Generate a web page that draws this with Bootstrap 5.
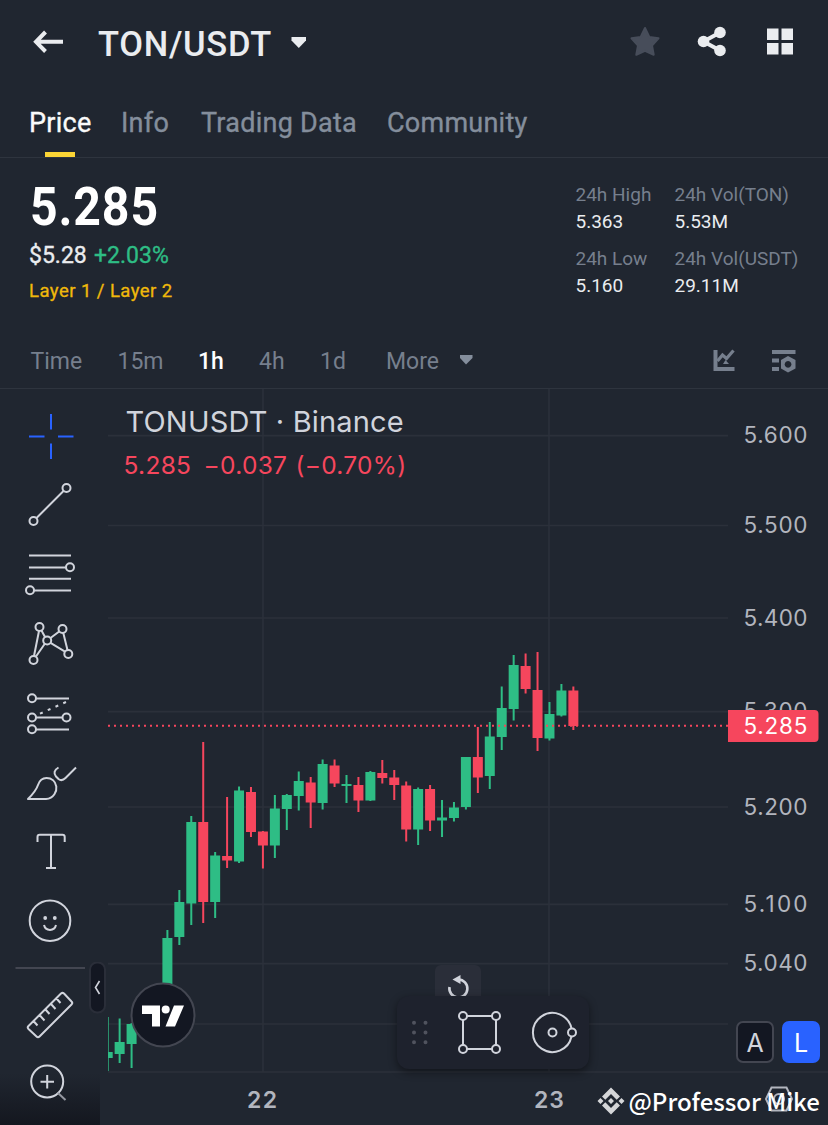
<!DOCTYPE html>
<html lang="en">
<head>
<meta charset="utf-8">
<meta name="viewport" content="width=device-width, initial-scale=1">
<title>TON/USDT</title>
<link href="https://cdn.jsdelivr.net/npm/bootstrap@5.3.0/dist/css/bootstrap.min.css" rel="stylesheet">
<style>
body{background:#202630;color:#eaecef;font-family:Roboto,"Liberation Sans",sans-serif;width:828px;height:1125px;overflow:hidden}
svg{display:block;flex:none}
span,.ln{white-space:nowrap}
.topbar{height:86px;padding:0 34px 2px 33px}
.pair{font-size:34.5px;font-weight:500;line-height:40px;letter-spacing:.7px;margin-left:34px;padding-top:3px}
.tabs{height:72px;border-bottom:1px solid #2e343e;padding-left:29px;font-size:27px;font-weight:400;letter-spacing:.25px;-webkit-text-stroke:.35px currentColor;color:#848e9c}
.tabs span{position:relative;line-height:74px;height:71px}
.tabs .on{color:#fafafa}
.tabs .on::after{content:"";position:absolute;left:16px;bottom:0;width:30px;height:5px;background:#fcd535}
.quote{height:173px;padding:0 29px}
.big{font-size:54.5px;font-weight:700;line-height:60px;color:#fff;margin-top:18px;letter-spacing:1px;transform:scaleX(.885);transform-origin:0 0;padding-left:1px}
.sub{font-size:23px;font-weight:400;-webkit-text-stroke:.35px currentColor;line-height:30px;margin-top:5px}
.up{color:#2ebd85}
.layer{font-size:18.5px;font-weight:400;-webkit-text-stroke:.3px currentColor;letter-spacing:.45px;line-height:24px;color:#f0b90b;margin-top:8px}
.stat{font-size:19px;line-height:27px}
.stat .lab{color:#767f8d}
.stat + .stat{margin-top:9.5px}
.frames{height:58px;border-bottom:1px solid #2e343e;font-size:23px;color:#767f8d;line-height:58px}
.frames span{padding-top:4px}
.frames .on{color:#fff;font-weight:500}
.tools{width:100px;height:736px;padding-top:13px;background:linear-gradient(transparent 93%,#14171f 100%)}
.tools g,.dock g{fill:none;stroke:#d1d4dc;stroke-width:2}
.chart{width:728px;height:736px}
.legend1,.legend2{position:absolute;left:25.500px;top:14px;font:400 29px/38px Inter,sans-serif;letter-spacing:.17px;color:#d1d4dc}
.legend2{left:23.500px;top:60px;font-size:24.5px;line-height:32px;letter-spacing:.3px;color:#f6465d;word-spacing:1px}
.fold{position:absolute;left:-11px;top:573px}
.reset{position:absolute;left:335px;top:576px;width:46px;height:40px;border-radius:6px;background:#2a2e39}
.dock{position:absolute;left:297px;top:607px;width:192px;height:73px;border-radius:12px;background:#1e222d;box-shadow:0 3px 9px rgba(0,0,0,.45)}
.sq{width:38px;height:42px;border-radius:7px;font:400 25px/40px Inter,sans-serif;text-align:center;border:2px solid #434651;background:#131722;color:#d1d4dc}
.sq.blue{background:#2962ff;border-color:#2962ff;color:#fff}
.modes{position:absolute;left:636px;top:632px;gap:8px}
.mark-by{position:absolute;left:497px;top:694px;font:500 24px/36px "Noto Sans CJK SC",sans-serif;color:#fff}
</style>
</head>
<body>
<header class="topbar d-flex align-items-center">
  <svg width="31" height="24" viewBox="33 30 31 24"><path d="M63 41.8H37M45.500 32L36 41.800L45.500 51.500" fill="none" stroke="#eaecef" stroke-width="4"/></svg>
  <span class="pair">TON/USDT</span>
  <svg style="margin-left:19px" width="16" height="13" viewBox="292 35 16 13"><path d="M292.500 36H307V39.500L299.800 47L292.500 39.500Z" fill="#eaecef"/></svg>
  <svg class="ms-auto" width="164" height="32" viewBox="630 27 164 32">
    <path d="M645 29L649.300 37.900L658.500 39.300L652 46.500L653.700 55.800L645 51.800L636.300 55.800L638 46.500L631.500 39.300L640.700 37.900Z" fill="#474d5a" stroke="#474d5a" stroke-width="2" stroke-linejoin="round"/>
    <path d="M720 33.500L703.500 42.500L720 51.500" fill="none" stroke="#eaecef" stroke-width="4"/>
    <g fill="#eaecef"><circle cx="720" cy="33.500" r="5.800"/><circle cx="703.500" cy="42.500" r="5.800"/><circle cx="720" cy="51.500" r="5.800"/>
    <path d="M767 29.500h11.500v11.500h-11.500zM781.500 29.500h11.500v11.500h-11.500zM767 44h11.500v11.500h-11.500zM781.500 44h11.500v11.500h-11.500z"/></g>
  </svg>
</header>
<nav class="tabs d-flex">
  <span class="on" style="width:92px">Price</span><span style="width:80px">Info</span><span style="width:186px">Trading Data</span><span>Community</span>
</nav>
<section class="quote d-flex justify-content-between">
  <div>
    <div class="big">5.285</div>
    <div class="sub ln d-flex"><span class="usd" style="width:65px">$5.28</span><span class="up">+2.03%</span></div>
    <div class="layer ln">Layer 1 / Layer 2</div>
  </div>
  <div class="d-flex" style="padding-top:23px">
    <div style="width:99px"><div class="stat"><div class="lab">24h High</div><div class="v">5.363</div></div><div class="stat"><div class="lab">24h Low</div><div class="v">5.160</div></div></div>
    <div style="width:124.500px"><div class="stat"><div class="lab ln">24h Vol(TON)</div><div class="v">5.53M</div></div><div class="stat"><div class="lab ln">24h Vol(USDT)</div><div class="v">29.11M</div></div></div>
  </div>
</section>
<nav class="frames d-flex align-items-center" style="padding-left:30.500px">
  <span style="width:87px">Time</span><span style="width:80.500px">15m</span><span class="on" style="width:61px">1h</span><span style="width:61px">4h</span><span style="width:66px">1d</span><span style="width:74px">More</span>
  <svg width="13" height="10" viewBox="460 355 13 10"><path d="M460 355H472.500V358L466 364.500L460 358Z" fill="#848e9c"/></svg>
  <svg style="margin-left:238px" width="88" height="28" viewBox="711 346 88 28">
    <g fill="#767f8d"><path d="M713.500 350h4v17h17v4h-21zM725.500 360l3.500 4h-6z"/>
    <path d="M717.500 361l5-6 4 3.500 7-8" fill="none" stroke="#767f8d" stroke-width="3.200"/>
    <path d="M772 350h23.500v4H772zM772 358.500h7v4h-7zM772 367h7v4h-7z"/>
    <path fill-rule="evenodd" d="M788 356l7.500 4v8.500L788 372.500l-7-4V360zM788 361a3.400 3.400 0 1 0 .1 0z"/></g>
  </svg>
</nav>
<main class="d-flex">
  <aside class="tools d-flex flex-column">
    <svg width="100" height="69" viewBox="0 402 100 69"><path d="M51 414v15.500M51 443.500V459M29 436.500h15.500M58 436.500h15.500" stroke="#2962ff" stroke-width="2"/></svg>
    <svg width="100" height="69" viewBox="0 471 100 69"><g><circle cx="33.500" cy="521" r="4"/><circle cx="66.500" cy="488" r="4"/><path d="M36.500 518L63.500 491"/></g></svg>
    <svg width="100" height="69" viewBox="0 540 100 69"><g><path d="M29 555.500H71M29 567.500H66M29 578.700H71M34 590.500H71"/><circle cx="70" cy="567.300" r="4"/><circle cx="30" cy="590.300" r="4"/></g></svg>
    <svg width="100" height="69" viewBox="0 609 100 69"><g><circle cx="39.500" cy="627" r="4"/><circle cx="62.500" cy="629" r="4"/><circle cx="47.200" cy="640.500" r="4"/><circle cx="33.500" cy="660" r="4"/><circle cx="68.300" cy="654" r="4"/><path d="M39 631L34 656M41.500 630.500L45 637M50.500 638L59.200 631.500M63.300 633L67.500 650M44.800 643.800L35.800 656.700M50.500 642.800L65 651.700"/></g></svg>
    <svg width="100" height="69" viewBox="0 678 100 69"><g><circle cx="32" cy="698.300" r="4"/><circle cx="32" cy="717.500" r="4"/><circle cx="32" cy="729.300" r="4"/><circle cx="66.500" cy="717.500" r="4"/><path d="M36 698.500H69M36 717.500H62.500M36 729.500H69"/><path d="M40 713.700L66 702" stroke-dasharray="3 5.500"/></g></svg>
    <svg width="100" height="69" viewBox="0 747 100 69"><g stroke-linejoin="round"><path d="M28 799H46C54 798.500 57 791 56.300 786.500C55.500 781 51.500 778 46.500 778C42 778 39.500 780.500 38 785C36 791 33 794 28 799Z"/><path d="M58.500 767.500C54 770 53.500 773.500 56 776.500L58.500 779C61 781 63 780.500 65.500 778L76 767.500"/></g></svg>
    <svg width="100" height="69" viewBox="0 816 100 69"><g><path d="M37.500 842V837Q37.500 834.800 39.700 834.800H62.500Q64.700 834.800 64.700 837V842M51 835V868M46 868H56"/></g></svg>
    <svg width="100" height="69" viewBox="0 885 100 69"><g><circle cx="50" cy="920.700" r="20.300"/><path d="M44 925C45.500 931.500 54.500 931.500 56 925"/></g><g style="fill:#d1d4dc;stroke:none"><circle cx="45.200" cy="918" r="1.900"/><circle cx="54.800" cy="918" r="1.900"/></g></svg>
    <svg width="100" height="30" viewBox="0 954 100 30"><path d="M15.500 968H85" stroke="#434651" stroke-width="2"/></svg>
    <svg width="100" height="65" viewBox="0 984 100 65"><g stroke-linejoin="round"><path d="M61 993.500Q62.500 992.300 64 993.500L71.500 1001.500Q73 1003 71.500 1004.500L39.500 1036.500Q38 1038 36.500 1036.500L28.500 1029Q27 1027.500 28.500 1026ZM33.500 1021L37.500 1025.500M39.500 1015L44.500 1020.500M45.500 1009.500L49.500 1014M51 1004L55.500 1009M56.500 998.500L60.500 1003"/></g></svg>
    <svg width="100" height="69" viewBox="0 1049 100 69"><g><circle cx="47.200" cy="1081.500" r="16"/><path d="M40.500 1081.800H54M47.200 1075V1088.500"/><path d="M58 1093L65.500 1100" stroke="#9598a1"/></g></svg>
  </aside>
  <div class="chart position-relative">
    <svg width="728" height="736" viewBox="100 389 728 736">
      <defs><clipPath id="pane"><rect x="108" y="389" width="620" height="683"/></clipPath></defs>
      <g id="grid" stroke="#2b303a" stroke-width="1.700"></g>
      <g id="candles" clip-path="url(#pane)"></g>
      <path d="M108 725.800H728" stroke="#f6465d" stroke-width="2" stroke-dasharray="2 4"/>
      <g id="axis" font-family="Inter,sans-serif" font-size="22.500" fill="#b2b5be"></g>
      <path d="M728 710H814.500Q818.500 710 818.500 714V738Q818.500 742 814.500 742H728Z" fill="#f6465d"/>
      <text x="743.500" y="734" textLength="64" font-family="Inter,sans-serif" font-size="22.500" fill="#fff">5.285</text>
      <g font-family="Inter,sans-serif" font-size="23" font-weight="600" fill="#b2b5be"><text x="247" y="1108" textLength="30">22</text><text x="534" y="1108" textLength="30">23</text></g>
      <circle cx="163" cy="1015" r="31.500" fill="#131722" stroke="#434651" stroke-width="2"/>
      <g fill="#fff"><path d="M142 1005.500H160V1026.500H152V1014H142ZM174 1005.500H184L175 1026.500H165.500Z"/><circle cx="165.700" cy="1009.500" r="4"/></g>
      <g fill="none" stroke="#b2b5be" stroke-width="2"><path d="M771.500 1087.500H786.500L792 1099L786.500 1110.500H771.500L766 1099Z"/><circle cx="779" cy="1099" r="5"/></g>
    </svg>
    <div class="legend1 ln">TONUSDT · Binance</div>
    <div class="legend2 ln"><span style="display:inline-block;width:80px">5.285</span><span>−0.037 (−0.70%)</span></div>
    <svg class="fold" width="17" height="52" viewBox="89 962 17 52"><rect x="90" y="962.500" width="15" height="50" rx="7" fill="#131722" stroke="#2a2e39" stroke-width="2"/><path d="M99.500 981L95.500 987.500L99.500 994" fill="none" stroke="#d1d4dc" stroke-width="1.600"/></svg>
    <div class="reset"><svg width="46" height="40" viewBox="435 965 46 40"><path d="M449.500 987A9 9 0 1 0 458.500 979.500" fill="none" stroke="#d1d4dc" stroke-width="2.600"/><path d="M452.500 979.500L460.500 975V984Z" fill="#d1d4dc"/></svg></div>
    <div class="dock"><svg width="192" height="73" viewBox="397 996 192 73">
      <g><path d="M467 1016H492M467 1049H492M463 1020V1045M496 1020V1045"/><circle cx="463" cy="1016" r="4"/><circle cx="496" cy="1016" r="4"/><circle cx="463" cy="1049" r="4"/><circle cx="496" cy="1049" r="4"/><circle cx="552.500" cy="1032.500" r="4"/><circle cx="572" cy="1032.500" r="4"/><path d="M571.500 1028.500A19.500 19.500 0 1 0 571.500 1036.500"/></g>
      <path d="M414 1022.800v.01M425.500 1022.800v.01M414 1032.500v.01M425.500 1032.500v.01M414 1042.200v.01M425.500 1042.200v.01" stroke="#50535e" stroke-width="4" stroke-linecap="round"/>
    </svg></div>
    <div class="modes d-flex"><div class="sq">A</div><div class="sq blue">L</div></div>
    <div class="mark-by d-flex align-items-center ln"><svg width="28" height="28" viewBox="597 1087 28 28" style="margin-right:3.500px"><g fill="#d5d6d8"><path d="M611 1087.500L620 1096.500L616.700 1099.800L611 1094L605.300 1099.800L602 1096.500ZM611 1114.500L620 1105.500L616.700 1102.200L611 1108L605.300 1102.200L602 1105.500ZM611 1098L614 1101L611 1104L608 1101ZM600.500 1098L603.500 1101L600.500 1104L597.500 1101ZM621.500 1098L624.500 1101L621.500 1104L618.500 1101Z"/></g></svg><span>@Professor Mike</span></div>
  </div>
</main>
<script src="https://cdn.jsdelivr.net/npm/bootstrap@5.3.0/dist/js/bootstrap.bundle.min.js"></script>
<script>
// gridlines and price labels
const prices=[["5.600",435.7],["5.500",525.5],["5.400",618],["5.300",711.7],["5.200",807],["5.100",904.3],["5.040",963.7]];
let grid='<path d="M263 389V1072M549 389V1072M108 1024H728M108 1072H828"/>',axis='';
for(const [t,y] of prices){grid+=`<path d="M108 ${y}H728"/>`;axis+=`<text x="743.5" y="${y+7.7}" textLength="64">${t}</text>`}
document.getElementById('grid').innerHTML=grid;
document.getElementById('axis').innerHTML=axis;
// hourly candles: slot, wick top, body top, body bottom, wick bottom, falling
const data=[[0,1017,1052,1058,1071],[1,1018.5,1042,1054,1063],[2,1023,1024,1044,1068],[5,930,938,985,985],[6,890,902,937,945],[7,816,822,903.5,925],[8,742,822,902,923,1],[9,852,855.5,902,918],[10,797,856,860.5,868,1],[11,786.5,790.5,861.5,863],[12,787,792,832,837,1],[13,831,831.5,845.5,868.5,1],[14,795,808.5,845.5,858],[15,794,795,809,830],[16,771.5,781,796,810.5],[17,777,782.5,802.5,828,1],[18,759.5,764,803,809.5],[19,759.5,765.5,783.5,787,1],[20,775,784,786,803],[21,777,785,800.5,812,1],[22,771,772,800.5,801],[23,760,773,778,783.5,1],[24,770,777.5,785,800,1],[25,781.5,785.5,829.5,841.5,1],[26,787.5,789,829.5,845],[27,785,789,820.5,831,1],[28,800,817.5,820.5,837],[29,802,807.5,818,821.5],[30,757,757,807,809.5],[31,727,757,777.5,793,1],[32,722,736.5,776,789],[33,686.5,708,737,750],[34,655,665,709,720.5],[35,653.5,666,689,693.5,1],[36,652,690,738,751,1],[37,702,714,738.5,740.5],[38,684,690.5,715.5,716.5],[39,686.5,690.5,726,730,1]];
document.getElementById('candles').innerHTML=data.map(([i,a,b,c,d,r])=>{const x=107.7+11.94*i;return `<path fill="${r?'#f6465d':'#2ebd85'}" d="M${x-1} ${a}h2V${d}h-2zM${x-5} ${b}h10V${c}h-10z"/>`}).join('');
</script>
</body>
</html>
